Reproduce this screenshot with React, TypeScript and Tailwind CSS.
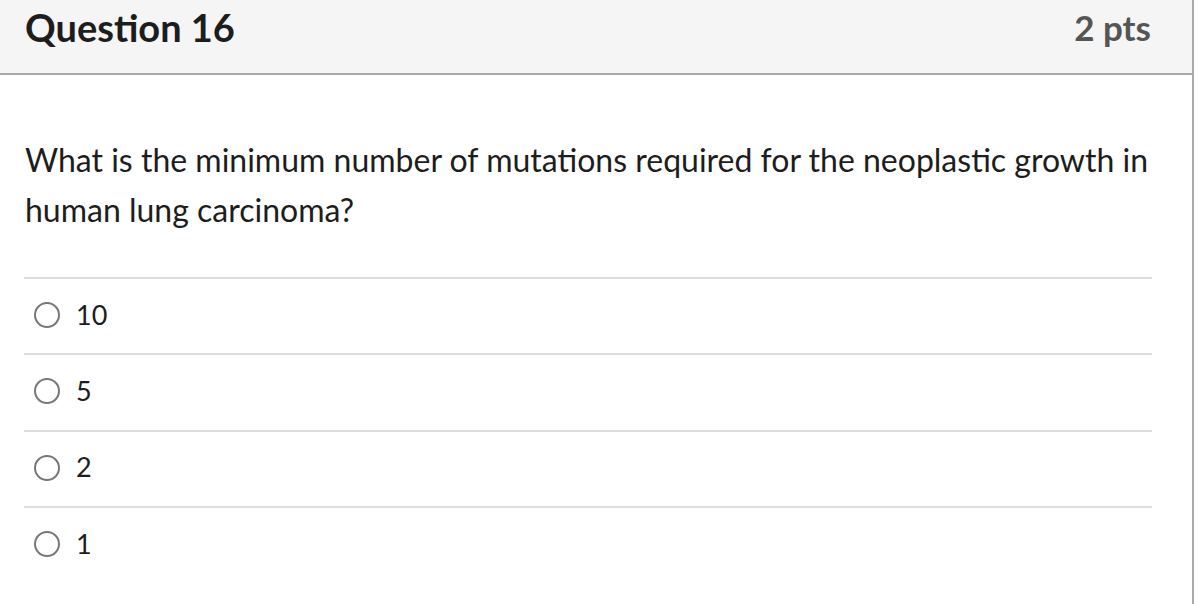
import React from "react";

const answers = ["10", "5", "2", "1"];

export default function App() {
    return (
        <div
            className="w-[1194px] h-[604px] bg-white border-r-2 border-[#aaaaaa] text-[#1d1d1d]"
            style={{ fontFamily: "Lato, 'Liberation Sans', sans-serif" }}
        >
            {/* Header */}
            <div className="h-[75px] bg-[#f5f5f5] border-b-2 border-[#aaaaaa] flex items-center justify-between pl-[25px] pr-[41px]">
                <h2 className="text-[38px] font-bold leading-none pb-[20px]">Question 16</h2>
                <span className="text-[35px] font-bold leading-none text-[#555555] pb-[18px]">2 pts</span>
            </div>

            {/* Body */}
            <div className="pl-[24px] pr-[40px] pt-[60px]">
                <p className="text-[32px] leading-[50px] pl-[1px]">
                    What is the minimum number of mutations required for the neoplastic growth in human lung
                    carcinoma?
                </p>

                <div className="mt-[42px]">
                    {answers.map((a) => (
                        <div
                            key={a}
                            className="h-[76.3px] border-t-2 border-[#dddddd] flex items-center gap-[16px] pl-[10px] pb-[2px]"
                        >
                            <span className="w-[26px] h-[26px] rounded-full border-2 border-[#777777] shrink-0" />
                            <span className="text-[27px]">{a}</span>
                        </div>
                    ))}
                </div>
            </div>
        </div>
    );
}
